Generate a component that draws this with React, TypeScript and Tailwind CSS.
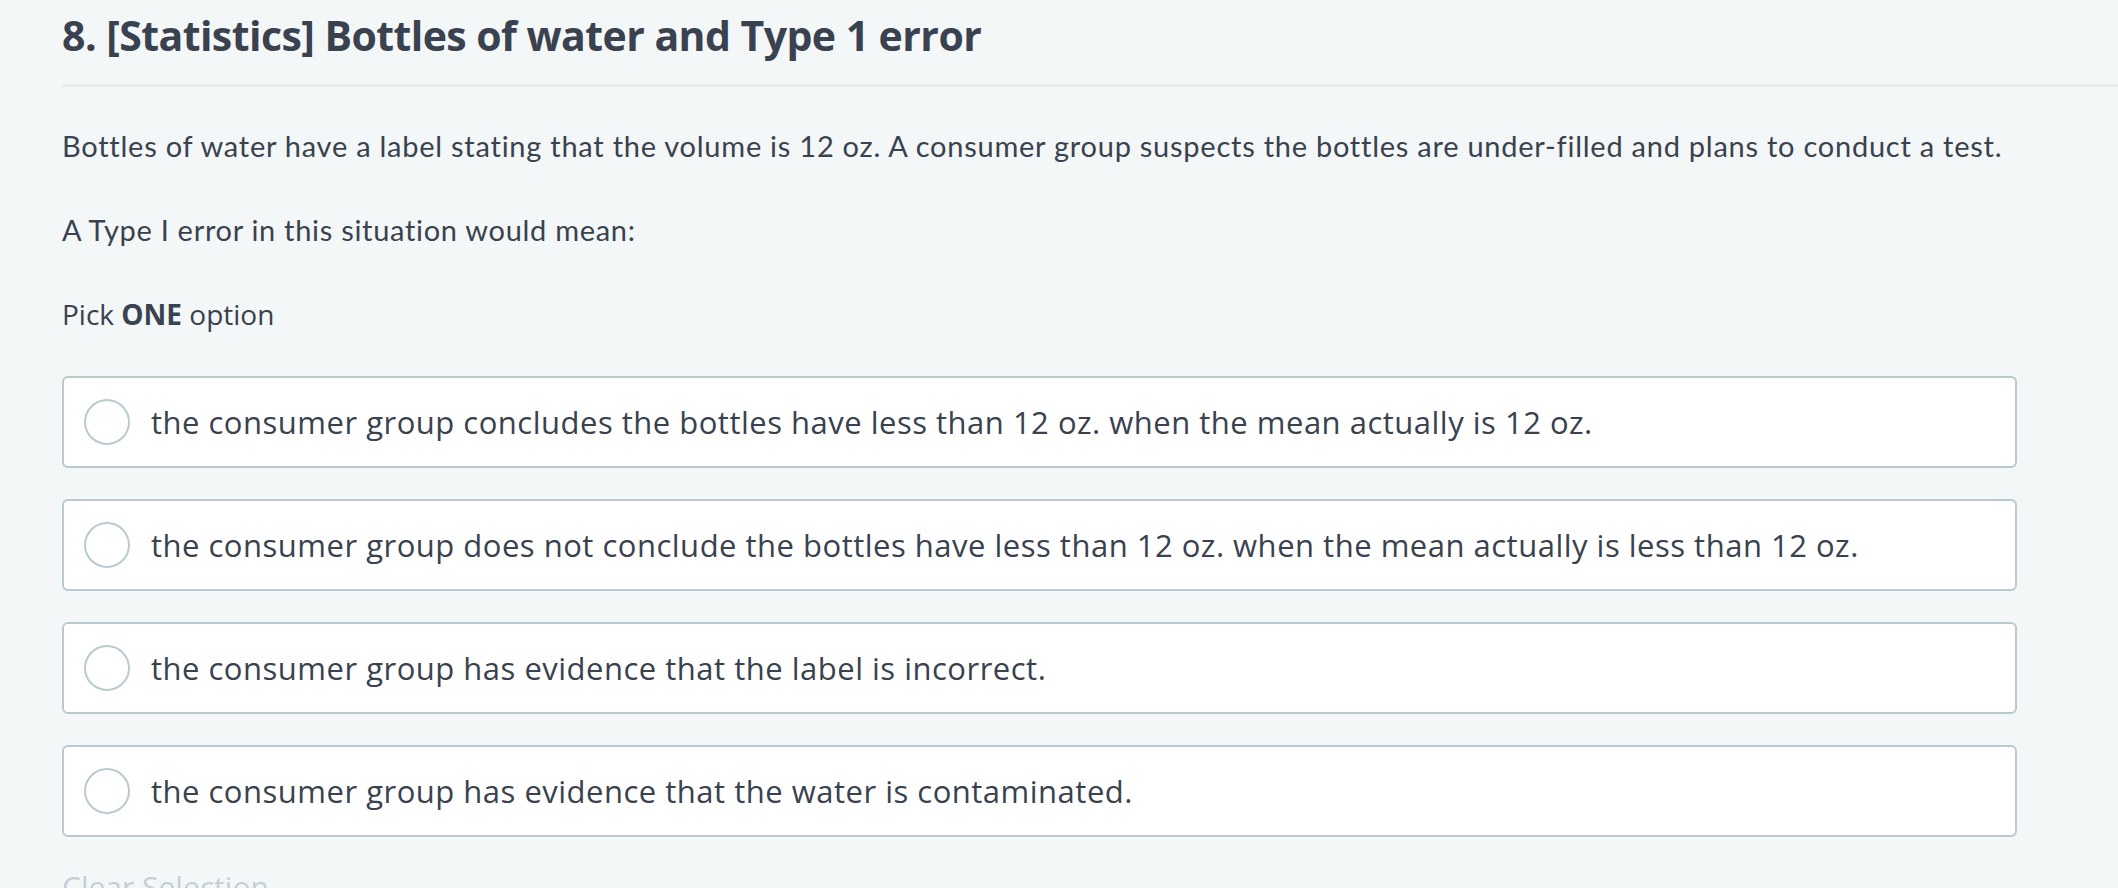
const options = [
  'the consumer group concludes the bottles have less than 12 oz. when the mean actually is 12 oz.',
  'the consumer group does not conclude the bottles have less than 12 oz. when the mean actually is less than 12 oz.',
  'the consumer group has evidence that the label is incorrect.',
  'the consumer group has evidence that the water is contaminated.',
];

export default function App() {
  return (
    <div className="min-h-screen w-full overflow-hidden bg-[#f3f7f8] pl-[62px] text-[#39424e]">
      {/* Question header */}
      <div className="pt-[7px]">
        <h1 className="font-['Open_Sans',sans-serif] text-[41px] font-bold leading-[56px] tracking-[-0.55px]">
          8. [Statistics] Bottles of water and Type 1 error
        </h1>
        <div className="mt-[21px] h-[3px] w-full bg-[#e6eeee]" />
      </div>

      {/* Question body */}
      <div className="pr-[101px]">
        <p className="mt-[39px] font-['Lato',sans-serif] text-[29px] leading-[40px] tracking-[0.75px]">
          Bottles of water have a label stating that the volume is 12 oz. A consumer group suspects the bottles are under-filled and plans to conduct a test.
        </p>
        <p className="mt-[44px] font-['Lato',sans-serif] text-[29px] leading-[40px] tracking-[0.7px]">
          A Type I error in this situation would mean:
        </p>
        <p className="mt-[44px] font-['Open_Sans',sans-serif] text-[28px] leading-[40px]">
          Pick <span className="font-bold">ONE</span> option
        </p>

        {/* Options */}
        <div className="mt-[42px] flex flex-col gap-[31px]">
          {options.map((text) => (
            <label
              key={text}
              className="flex h-[92px] cursor-pointer items-center gap-[21px] rounded-[6px] border-2 border-[#b8cacf] bg-white pl-[20px]"
            >
              <span className="h-[46px] w-[46px] flex-shrink-0 rounded-full border-2 border-[#b9cbd0] bg-white" />
              <span className="font-['Open_Sans',sans-serif] text-[31px] leading-[40px] tracking-[0.5px]">{text}</span>
            </label>
          ))}
        </div>

        <p className="mt-[30px] font-['Open_Sans',sans-serif] text-[30px] leading-[40px] text-[#c3d0d5]">
          Clear Selection
        </p>
      </div>
    </div>
  );
}
